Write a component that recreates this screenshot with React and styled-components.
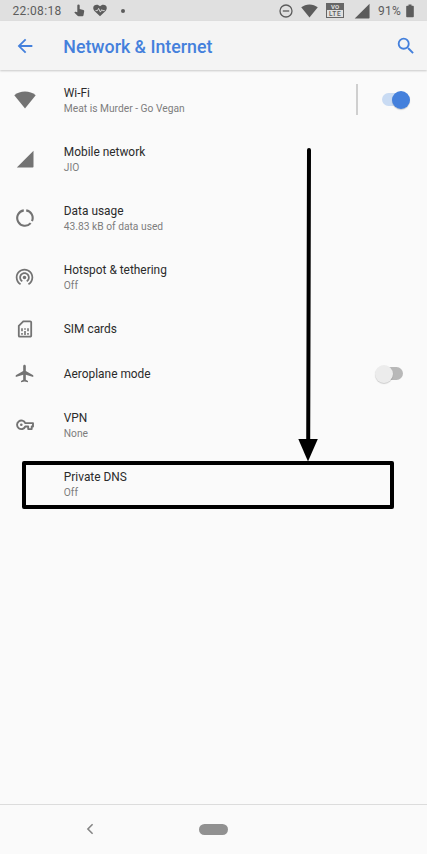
import React from "react";
import styled, { createGlobalStyle } from "styled-components";
import {
  MdArrowBack,
  MdSearch,
  MdWifiTethering,
  MdAirplanemodeActive,
} from "react-icons/md";

function WifiIcon({ width, height }) {
  return (
    <svg width={width} height={height} viewBox="0 0 22 18">
      <path d="M11 17.5L.3 4.2C3.3 1.8 6.9.5 11 .5s7.7 1.3 10.7 3.7z" fill="currentColor" />
    </svg>
  );
}

function SignalIcon({ size }) {
  return (
    <svg width={size} height={size} viewBox="0 0 18 18">
      <path d="M.8 17.5L17.5.8v15.9a.8.8 0 0 1-.8.8z" fill="currentColor" />
    </svg>
  );
}

function DataUsageIcon() {
  return (
    <svg width="18" height="18" viewBox="0 0 18 18" fill="none" stroke="currentColor" strokeWidth="2.1">
      <path d="M10.2 1.4A7.7 7.7 0 0 1 16 12.1" />
      <path d="M14.7 14.1A7.7 7.7 0 1 1 7.8 1.4" />
    </svg>
  );
}

function SimIcon() {
  return (
    <svg width="16" height="18" viewBox="0 0 16 18" fill="none" stroke="currentColor">
      <path d="M6.3 1.3H13.2a1 1 0 0 1 1 1v13.4a1 1 0 0 1-1 1H2.8a1 1 0 0 1-1-1V5.8z" strokeWidth="1.8" />
      <path d="M5 8.2v3M11 8.2v3M8 11v4" strokeWidth="1.6" />
      <path d="M5 13v1.7M11 13v1.7M8 8.2v1.6" strokeWidth="1.6" />
    </svg>
  );
}

function VpnIcon() {
  return (
    <svg width="18" height="12" viewBox="0 0 18 12" fill="none" stroke="currentColor" strokeWidth="1.9" strokeLinejoin="round">
      <path d="M9.3 4.1H17v3.4h-1.3v2.6h-3.5V7.5H9.3A4.3 4.3 0 1 1 9.3 4.1z" />
      <circle cx="5.3" cy="5.8" r="1.3" fill="currentColor" stroke="none" />
    </svg>
  );
}

function TouchIcon() {
  return (
    <svg width="11" height="13" viewBox="0 0 11 13" fill="currentColor">
      <path d="M3.3 1.6a1.2 1.2 0 0 1 2.4 0V5l3.7 1.1c.6.2.9.6.8 1.2l-.7 4c-.1.6-.5.9-1.1.9H4.5c-.4 0-.7-.1-1-.4L.3 8.5l.6-.6c.2-.2.5-.2.8-.1l1.6.5z" />
    </svg>
  );
}

function HeartIcon() {
  return (
    <svg width="14" height="13" viewBox="0 0 14 13">
      <path
        d="M7 12.3L1.7 7.2C-.3 5-.1 2.7 1.3 1.5 3 .1 5.6.4 7 2.3 8.4.4 11 .1 12.7 1.5c1.4 1.2 1.6 3.5-.4 5.7z"
        fill="currentColor"
      />
      <path d="M2.5 6.6H4.5l1.1-2.2 1.8 3.7 1.4-2.5.6 1h2.3" fill="none" stroke="#e0e0e0" strokeWidth=".9" />
    </svg>
  );
}

function DndIcon() {
  return (
    <svg width="14" height="14" viewBox="0 0 14 14" fill="none" stroke="currentColor" strokeWidth="1.3">
      <circle cx="7" cy="7" r="6" />
      <path d="M3.8 7h6.4" />
    </svg>
  );
}

function BatteryIcon() {
  return (
    <svg width="8" height="14" viewBox="0 0 8 14" fill="currentColor">
      <path d="M2.5.5h3v1.2H7c.5 0 .8.3.8.8V12.5c0 .5-.3.8-.8.8H1c-.5 0-.8-.3-.8-.8V2.5c0-.5.3-.8.8-.8h1.5z" />
    </svg>
  );
}

const settings = [
  { title: "Wi-Fi", summary: "Meat is Murder - Go Vegan", icon: <WifiIcon width={22} height={18} />, toggle: "on" },
  { title: "Mobile network", summary: "JIO", icon: <SignalIcon size={18} /> },
  { title: "Data usage", summary: "43.83 kB of data used", icon: <DataUsageIcon /> },
  { title: "Hotspot & tethering", summary: "Off", icon: <MdWifiTethering size={21} /> },
  { title: "SIM cards", icon: <SimIcon /> },
  { title: "Aeroplane mode", icon: <MdAirplanemodeActive size={21} />, toggle: "off" },
  { title: "VPN", summary: "None", icon: <VpnIcon /> },
  { title: "Private DNS", summary: "Off", highlighted: true },
];

function Toggle({ on }) {
  return (
    <Switch $on={on}>
      <Track $on={on} />
      <Thumb $on={on} />
    </Switch>
  );
}

function App() {
  return (
    <Screen>
      <GlobalStyle />
      <StatusBar>
        <Clock>22:08:18</Clock>
        <Notifications>
          <TouchIcon />
          <HeartIcon />
          <Dot />
        </Notifications>
        <SystemIcons>
          <DndIcon />
          <WifiIcon width={17} height={14} />
          <VoLte>
            <Vo>VO</Vo>
            <Lte>LTE</Lte>
          </VoLte>
          <SignalIcon size={16} />
          <Percent>91%</Percent>
          <BatteryIcon />
        </SystemIcons>
      </StatusBar>
      <Header>
        <MdArrowBack size={22} />
        <Heading>Network &amp; Internet</Heading>
        <MdSearch size={22} />
      </Header>
      <List>
        {settings.map((item) => (
          <Row key={item.title} $tall={Boolean(item.summary)}>
            <IconSlot>{item.icon}</IconSlot>
            <Labels $tall={Boolean(item.summary)}>
              <Title>{item.title}</Title>
              {item.summary && <Summary>{item.summary}</Summary>}
            </Labels>
            {item.toggle === "on" && <Divider />}
            {item.toggle && <Toggle on={item.toggle === "on"} />}
            {item.highlighted && <Highlight />}
          </Row>
        ))}
        <Pointer width="20" height="315" viewBox="0 0 20 315">
          <path d="M11 2L10.2 294" stroke="#000" strokeWidth="4" strokeLinecap="round" />
          <path d="M.3 291h19.5L10 313.5z" />
        </Pointer>
      </List>
      <NavBar>
        <BackKey width="8" height="12" viewBox="0 0 8 12">
          <path d="M6.6 1.3L1.9 6l4.7 4.7" fill="none" stroke="#858585" strokeWidth="1.6" />
        </BackKey>
        <HomePill />
      </NavBar>
    </Screen>
  );
}

export default App;

const GlobalStyle = createGlobalStyle`
  * {
    box-sizing: border-box;
  }
  body {
    margin: 0;
    background: #fafafa;
  }
  svg {
    display: block;
    flex-shrink: 0;
  }
`;

const Screen = styled.div`
  display: flex;
  flex-direction: column;
  width: 427px;
  height: 854px;
  overflow: hidden;
  background: #fafafa;
  font-family: Roboto, "Liberation Sans", sans-serif;
`;

const StatusBar = styled.div`
  display: flex;
  align-items: center;
  height: 21px;
  padding: 0 13px 0 12.5px;
  background: #e0e0e0;
  color: #5c5c5c;
`;

const Clock = styled.span`
  width: 61px;
  font-size: 12px;
  letter-spacing: 0.35px;
`;

const Notifications = styled.div`
  display: flex;
  align-items: center;
  gap: 8px;
`;

const Dot = styled.span`
  width: 4px;
  height: 4px;
  margin-left: 6px;
  border-radius: 50%;
  background: #5c5c5c;
`;

const SystemIcons = styled.div`
  display: flex;
  align-items: center;
  margin-left: auto;
  gap: 8px;
`;

const VoLte = styled.div`
  display: flex;
  flex-direction: column;
  width: 18px;
  height: 15px;
  margin-right: 2px;
  border: 1px solid #666;
  text-align: center;
`;

const Vo = styled.span`
  height: 6px;
  background: #666;
  color: #e0e0e0;
  font-size: 6px;
  font-weight: 700;
  line-height: 6px;
`;

const Lte = styled.span`
  height: 7px;
  font-size: 6.5px;
  font-weight: 500;
  line-height: 8px;
  letter-spacing: 0.6px;
`;

const Percent = styled.span`
  margin-right: -3px;
  font-size: 12px;
  letter-spacing: 0.2px;
`;

const Header = styled.header`
  display: flex;
  align-items: center;
  height: 49px;
  padding: 0 10px 0 14px;
  background: #f4f4f4;
  box-shadow: 0 1px 2px rgba(0, 0, 0, 0.2);
  color: #4480dc;
  z-index: 1;
`;

const Heading = styled.h1`
  flex: 1;
  margin: 1px 0 0 27.3px;
  font-size: 17.8px;
  font-weight: 500;
`;

const List = styled.main`
  position: relative;
  flex: 1;
`;

const Row = styled.div`
  position: relative;
  display: flex;
  align-items: center;
  height: ${({ $tall }) => ($tall ? "59px" : "44.5px")};
  padding-top: ${({ $tall }) => ($tall ? "0" : "1.5px")};
`;

const IconSlot = styled.div`
  display: flex;
  justify-content: center;
  width: 50px;
  margin-right: 13.8px;
  padding-right: 1px;
  color: #737373;
`;

const Labels = styled.div`
  flex: 1;
  padding-top: ${({ $tall }) => ($tall ? "1px" : "0")};
`;

const Title = styled.div`
  color: #2b2b2b;
  font-size: 11.9px;
  line-height: 16px;
`;

const Summary = styled.div`
  margin-top: 1px;
  color: #7d7d7d;
  font-size: 10.25px;
  line-height: 14px;
`;

const Divider = styled.div`
  width: 2px;
  height: 31px;
  background: #cfcfcf;
`;

const Switch = styled.div`
  display: flex;
  align-items: center;
  flex-direction: ${({ $on }) => ($on ? "row" : "row-reverse")};
  margin-left: ${({ $on }) => ($on ? "24px" : "0")};
  margin-right: ${({ $on }) => ($on ? "17px" : "24px")};
`;

const Track = styled.div`
  width: 22px;
  height: 13px;
  border-radius: 7px;
  background: ${({ $on }) => ($on ? "#c9dbf3" : "#b8b8b8")};
`;

const Thumb = styled.div`
  width: 18px;
  height: 18px;
  margin: ${({ $on }) => ($on ? "0 0 0 -12px" : "0 -12px 0 0")};
  border-radius: 50%;
  background: ${({ $on }) => ($on ? "#4480dc" : "#ececec")};
  box-shadow: 0 1px 1px rgba(0, 0, 0, 0.18);
  z-index: 1;
`;

const Highlight = styled.div`
  position: absolute;
  top: 7px;
  left: 22px;
  width: 372px;
  height: 48px;
  border: 4px solid #000;
  border-radius: 2px;
`;

const Pointer = styled.svg`
  position: absolute;
  top: 78px;
  left: 298px;
`;

const NavBar = styled.nav`
  display: grid;
  grid-template-columns: 1fr 29px 1fr;
  align-items: center;
  height: 50px;
  padding-bottom: 1px;
  border-top: 1px solid #dcdcdc;
`;

const BackKey = styled.svg`
  margin-left: 86px;
`;

const HomePill = styled.div`
  height: 11px;
  border-radius: 6px;
  background: #919191;
`;
